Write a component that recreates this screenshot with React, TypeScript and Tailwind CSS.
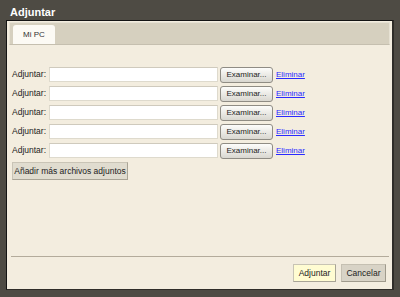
import React from 'react';

const rows = [0, 1, 2, 3, 4];

export default function App() {
  return (
    <div
      className="w-[400px] h-[297px] bg-[#4e4b44] flex flex-col overflow-hidden"
      style={{ fontFamily: '"Liberation Sans", Arial, sans-serif' }}
    >
      {/* Title bar */}
      <div className="h-[20px] pl-[10px] pt-[6px] text-[11px] leading-[13px] font-bold text-white">
        Adjuntar
      </div>

      {/* Dialog body */}
      <div className="ml-[6px] w-[388px] h-[270px] border-l border-t border-[#141414] border-r-2 border-r-[#2f2d29] border-b border-b-[#2f2d29] bg-[#f3eddf] flex flex-col">
        {/* Tab strip */}
        <div className="mt-[1px] mx-[2px] h-[23px] bg-[#d6d0bf] border border-[#e6e1d3] border-b-[#c5bfaf] flex items-end pl-[3px]">
          <div className="w-[42px] h-[19px] bg-[#fcfaf4] rounded-t-[3px] flex items-center justify-center text-[8px] text-[#333]">
            Mi PC
          </div>
        </div>

        {/* File rows */}
        <div className="mt-[22px] pl-[5px] flex flex-col">
          {rows.map((r) => (
            <div key={r} className="h-[19px] flex items-start">
              <span className="w-[37px] text-[8.5px] leading-[15px] text-[#222]">Adjuntar:</span>
              <div className="w-[169px] h-[15px] bg-white border border-[#dedacd] border-t-[#cfcabd]" />
              <button className="ml-[2px] w-[53px] h-[16px] rounded-[3px] border border-[#8f8c84] bg-gradient-to-b from-[#fdfdfb] to-[#d9d7d0] text-[8px] leading-[14px] text-[#222]">
                Examinar...
              </button>
              <a className="ml-[3px] text-[8px] leading-[16px] text-[#2a2aff] underline">Eliminar</a>
            </div>
          ))}
          <button className="mt-[0px] w-[116px] h-[18px] bg-[#e0dccf] border border-[#c9c4b6] border-b-[#a9a496] border-r-[#a9a496] text-[8.5px] leading-[16px] text-[#222]">
            Añadir más archivos adjuntos
          </button>
        </div>

        {/* Separator */}
        <div className="mt-[76px] ml-[4px] w-[378px] h-[1px] bg-[#b3ab9b]" />

        {/* Footer buttons */}
        <div className="mt-[7px] flex justify-end gap-[5px] pr-[6px]">
          <button className="w-[43px] h-[18px] bg-[#fffcd2] border border-[#c8c4b4] border-b-[#a8a496] border-r-[#a8a496] text-[8.5px] leading-[16px] text-[#222]">
            Adjuntar
          </button>
          <button className="w-[45px] h-[18px] bg-[#d8d3c6] border border-[#c5c0b2] border-b-[#9f9a8c] border-r-[#9f9a8c] text-[8.5px] leading-[16px] text-[#222]">
            Cancelar
          </button>
        </div>
      </div>
    </div>
  );
}
